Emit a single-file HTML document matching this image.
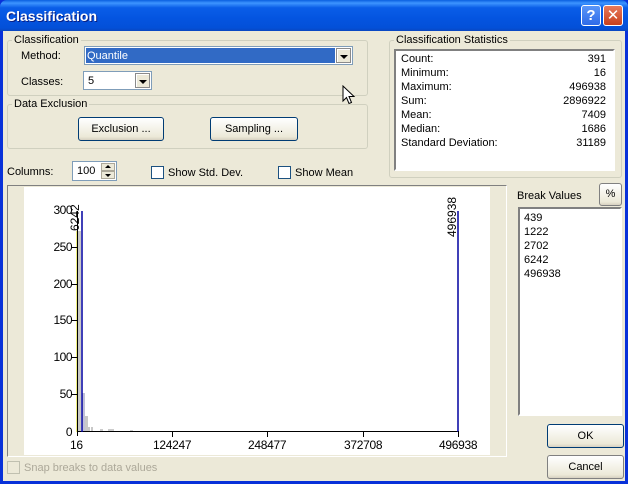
<!DOCTYPE html>
<html><head><style>
*{margin:0;padding:0;box-sizing:border-box}
body{width:628px;height:484px;overflow:hidden;background:#0831d9;font-family:Tahoma,"Liberation Sans","DejaVu Sans",sans-serif;font-size:11px;color:#000;position:relative}
.a{position:absolute}
#title{left:0;top:0;width:628px;height:31px;background:linear-gradient(#0a5fe0 0%,#3d95ff 10%,#0a5ee8 25%,#0454e0 60%,#0350d8 90%,#0a46c0 100%);border-radius:7px 7px 0 0}
#title span{position:absolute;left:6px;top:8px;color:#fff;font-weight:bold;font-size:14px;text-shadow:1px 1px #0a1e80}
#body{left:3px;top:31px;width:622px;height:450px;background:#ece9d8}
.grp{position:absolute;border:1px solid #d0d0bf;border-radius:3px}
.gl{position:absolute;background:#ece9d8;padding:0 2px;top:-8px;left:4px;color:#000}
.btn{position:absolute;border:1px solid #003c74;border-radius:3px;background:linear-gradient(#fff,#ece9d8 85%,#d6d0c0);text-align:center;line-height:23px}
.white{position:absolute;background:#fff;border:1px solid #7f9db9}
.chk{position:absolute;width:13px;height:13px;border:1px solid #1c5180;background:#fff}
.row{position:absolute;left:5px;right:7px;height:14px}
.row b{font-weight:normal;float:right}
.dd{position:absolute;right:1px;top:1px;width:15px;bottom:1px;background:#ece9d8;border:1px solid #8a8a8a;box-shadow:inset 1px 1px #fff}
.dd:after{content:"";position:absolute;left:3px;top:6px;border-left:4px solid transparent;border-right:4px solid transparent;border-top:4px solid #000}
.yl{position:absolute;font-size:12px;text-align:right;width:30px;font-family:"Liberation Sans Narrow","Liberation Sans",sans-serif;letter-spacing:-0.5px}
.xl{position:absolute;font-size:12px;font-family:"Liberation Sans",sans-serif;letter-spacing:-0.3px}
</style></head><body>
<div id="title" class="a"><span>Classification</span>
<div class="a" style="left:581px;top:5px;width:20px;height:21px;border:1px solid #fff;border-radius:3px;background:linear-gradient(#5a96f8,#2e6ae8);color:#fff;font-weight:bold;font-size:15px;text-align:center;line-height:19px">?</div>
<div class="a" style="left:603px;top:5px;width:20px;height:21px;border:1px solid #fff;border-radius:3px;background:linear-gradient(#e87a5c,#c8401c);color:#fff;font-weight:bold;font-size:15px;text-align:center;line-height:19px">✕</div>
</div>
<div id="body" class="a"></div>

<div class="grp" style="left:7px;top:40px;width:361px;height:56px"><span class="gl" style="top:-7px">Classification</span></div>
<div class="a" style="left:21px;top:50px">Method:</div>
<div class="white" style="left:84px;top:46px;width:269px;height:19px"><div class="a" style="left:1px;top:1px;right:17px;bottom:1px;background:#316ac5;color:#fff;padding-left:1px;line-height:16px">Quantile</div><div class="dd"></div></div>
<div class="a" style="left:21px;top:76px">Classes:</div>
<div class="white" style="left:83px;top:71px;width:69px;height:19px"><div class="a" style="left:4px;top:3px">5</div><div class="dd"></div></div>

<div class="grp" style="left:7px;top:104px;width:361px;height:45px"><span class="gl" style="top:-7px">Data Exclusion</span></div>
<div class="btn" style="left:78px;top:117px;width:86px;height:24px">Exclusion ...</div>
<div class="btn" style="left:210px;top:117px;width:88px;height:24px">Sampling ...</div>
<svg class="a" style="left:342px;top:85px" width="14" height="22"><path d="M1 1 L1 16 L4.5 12.5 L7 18.5 L9.5 17.5 L7 11.5 L12 11.5 Z" fill="#fff" stroke="#000" stroke-width="1"/></svg>

<div class="grp" style="left:389px;top:40px;width:233px;height:138px"><span class="gl" style="top:-7px">Classification Statistics</span></div>
<div class="a" style="left:394px;top:49px;width:221px;height:122px;background:#fff;border:2px solid;border-color:#808080 #fff #fff #808080">
<div class="row" style="top:2px">Count:<b>391</b></div>
<div class="row" style="top:16px">Minimum:<b>16</b></div>
<div class="row" style="top:30px">Maximum:<b>496938</b></div>
<div class="row" style="top:44px">Sum:<b>2896922</b></div>
<div class="row" style="top:58px">Mean:<b>7409</b></div>
<div class="row" style="top:72px">Median:<b>1686</b></div>
<div class="row" style="top:86px">Standard Deviation:<b>31189</b></div>
</div>

<div class="a" style="left:7px;top:166px">Columns:</div>
<div class="white" style="left:72px;top:161px;width:45px;height:20px"><div class="a" style="left:4px;top:3px">100</div>
<div class="a" style="right:1px;top:1px;width:14px;height:8px;background:#ece9d8;border:1px solid #aca899"><div class="a" style="left:3px;top:1px;border-left:3px solid transparent;border-right:3px solid transparent;border-bottom:3px solid #000"></div></div>
<div class="a" style="right:1px;top:9px;width:14px;height:8px;background:#ece9d8;border:1px solid #aca899"><div class="a" style="left:3px;top:2px;border-left:3px solid transparent;border-right:3px solid transparent;border-top:3px solid #000"></div></div></div>
<div class="chk" style="left:151px;top:166px"></div><div class="a" style="left:168px;top:167px">Show Std. Dev.</div>
<div class="chk" style="left:278px;top:166px"></div><div class="a" style="left:295px;top:167px">Show Mean</div>

<div class="a" style="left:7px;top:185px;width:500px;height:272px;border-top:1px solid #808080;border-left:1px solid #808080;border-right:1px solid #fff;border-bottom:1px solid #fff;background:#ece9d8"></div>
<div class="a" style="left:24px;top:187px;width:466px;height:268px;background:#fff"></div>
<svg class="a" style="left:0;top:0" width="628" height="484">
<rect x="77" y="231" width="4" height="201" fill="#c8c8c8"/>
<rect x="76" y="231" width="2" height="201" fill="#f0f080"/>
<rect x="82" y="393" width="3" height="39" fill="#c0c0d8"/>
<rect x="85" y="416" width="3" height="16" fill="#c8c8c8"/>
<rect x="88" y="427" width="2" height="5" fill="#c8c8c8"/><rect x="91" y="427" width="2" height="5" fill="#c8c8c8"/>
<rect x="100" y="429" width="3" height="3" fill="#ccc"/><rect x="108" y="429" width="6" height="3" fill="#ccc"/><rect x="130" y="430" width="3" height="2" fill="#ccc"/>
<line x1="77.5" y1="211" x2="77.5" y2="436" stroke="#000"/>
<line x1="77" y1="431.5" x2="459" y2="431.5" stroke="#000"/>
<line x1="82" y1="211" x2="82" y2="432" stroke="#0000a0" stroke-width="1.5"/>
<line x1="458" y1="211" x2="458" y2="432" stroke="#0000a0" stroke-width="1.5"/>
<g stroke="#000"><line x1="72" y1="247.5" x2="78" y2="247.5"/><line x1="72" y1="284.5" x2="78" y2="284.5"/><line x1="72" y1="320.5" x2="78" y2="320.5"/><line x1="72" y1="357.5" x2="78" y2="357.5"/><line x1="72" y1="394.5" x2="78" y2="394.5"/>
<line x1="172.5" y1="431" x2="172.5" y2="437"/><line x1="267.5" y1="431" x2="267.5" y2="437"/><line x1="363.5" y1="431" x2="363.5" y2="437"/><line x1="458.5" y1="431" x2="458.5" y2="437"/></g>
<text x="79" y="231" transform="rotate(-90 79 231)" font-family="Liberation Sans" font-size="12">6242</text>
<text x="456" y="237" transform="rotate(-90 456 237)" font-family="Liberation Sans" font-size="12">496938</text>
</svg>
<div class="yl" style="left:42px;top:203px">300</div>
<div class="yl" style="left:42px;top:240px">250</div>
<div class="yl" style="left:42px;top:277px">200</div>
<div class="yl" style="left:42px;top:313px">150</div>
<div class="yl" style="left:42px;top:350px">100</div>
<div class="yl" style="left:42px;top:387px">50</div>
<div class="yl" style="left:42px;top:425px">0</div>
<div class="xl" style="left:70px;top:438px">16</div>
<div class="xl" style="left:153px;top:438px">124247</div>
<div class="xl" style="left:248px;top:438px">248477</div>
<div class="xl" style="left:344px;top:438px">372708</div>
<div class="xl" style="left:439px;top:438px">496938</div>

<div class="a" style="left:517px;top:190px">Break Values</div>
<div class="btn" style="left:599px;top:183px;width:23px;height:23px;border-color:#808080;line-height:20px">%</div>
<div class="a" style="left:518px;top:207px;width:104px;height:209px;background:#fff;border:2px solid;border-color:#808080 #fff #fff #808080">
<div class="a" style="left:4px;top:2px;line-height:14px">439<br>1222<br>2702<br>6242<br>496938</div></div>
<div class="btn" style="left:547px;top:424px;width:77px;height:24px">OK</div>
<div class="btn" style="left:547px;top:455px;width:77px;height:24px;border-color:#808080">Cancel</div>
<div class="chk" style="left:7px;top:461px;border-color:#c0c0b0;background:#ece9d8"></div>
<div class="a" style="left:24px;top:462px;color:#aca899">Snap breaks to data values</div>
</body></html>
